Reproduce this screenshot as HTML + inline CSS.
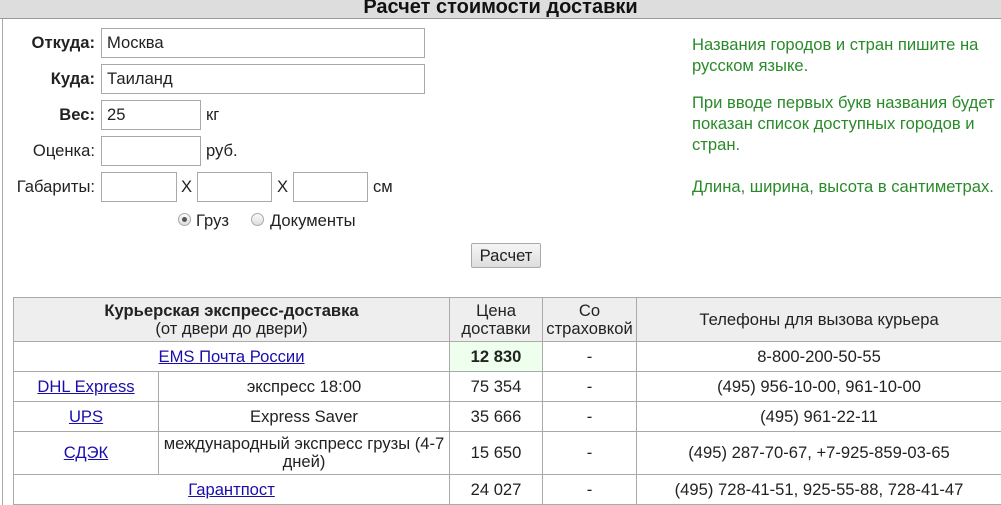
<!DOCTYPE html>
<html><head><meta charset="utf-8"><style>
body{margin:0;width:1001px;height:505px;overflow:hidden;background:#fff;font-family:"Liberation Sans",Arial,sans-serif;font-size:16.6px;color:#222;position:relative}
.hdr{position:absolute;left:0;top:0;width:1001px;height:18px;background:#ddd;border-bottom:1px solid #999;text-align:center;font-weight:bold;font-size:20px;line-height:14px;color:#111;overflow:hidden}
.lb{position:absolute;text-align:right;width:95px;left:0;line-height:30px}
.in{position:absolute;border:1px solid #aaa;box-sizing:border-box;padding-left:5px;line-height:28px;background:#fff}
.t{position:absolute;line-height:30px}
.g{position:absolute;left:692px;color:#2a8a2a;line-height:21px;width:312px}
.rad{position:absolute;width:13px;height:13px;border-radius:50%;border:1px solid #aaa;background:linear-gradient(#fafafa,#ddd);box-sizing:border-box}
.btn{position:absolute;left:471px;top:243px;width:70px;height:25px;border:1px solid #aaa;box-sizing:border-box;background:linear-gradient(#f6f6f6,#ddd);text-align:center;line-height:23px;border-radius:2px}
table{position:absolute;left:13px;top:297px;border-collapse:collapse;width:988px;table-layout:fixed}
td,th{border:1px solid #aaa;text-align:center;padding:0 2px;font-weight:normal;line-height:18px}
th{background:#eee;height:43px}
a{color:#1a0dab;text-decoration:underline}
.vl{position:absolute;left:2px;top:19px;width:1px;height:486px;background:#aaa}
</style></head><body>
<div class="hdr">Расчет стоимости доставки</div>
<div class="vl"></div>
<div class="lb" style="top:28px;font-weight:bold">Откуда:</div>
<div class="in" style="left:101px;top:28px;width:324px;height:30px">Москва</div>
<div class="lb" style="top:64px;font-weight:bold">Куда:</div>
<div class="in" style="left:101px;top:64px;width:324px;height:30px">Таиланд</div>
<div class="lb" style="top:100px;font-weight:bold">Вес:</div>
<div class="in" style="left:101px;top:100px;width:100px;height:30px">25</div>
<div class="t" style="left:206px;top:100px">кг</div>
<div class="lb" style="top:136px">Оценка:</div>
<div class="in" style="left:101px;top:136px;width:100px;height:30px"></div>
<div class="t" style="left:206px;top:136px">руб.</div>
<div class="lb" style="top:172px">Габариты:</div>
<div class="in" style="left:101px;top:172px;width:76px;height:30px"></div>
<div class="t" style="left:181px;top:172px">X</div>
<div class="in" style="left:197px;top:172px;width:75px;height:30px"></div>
<div class="t" style="left:277px;top:172px">X</div>
<div class="in" style="left:293px;top:172px;width:75px;height:30px"></div>
<div class="t" style="left:373px;top:172px">см</div>
<div class="rad" style="left:178px;top:213px"><div style="width:5px;height:5px;border-radius:50%;background:#555;margin:3px"></div></div>
<div class="t" style="left:196px;top:206px">Груз</div>
<div class="rad" style="left:251px;top:213px"></div>
<div class="t" style="left:270px;top:206px">Документы</div>
<div class="btn">Расчет</div>
<div class="g" style="top:34px">Названия городов и стран пишите на русском языке.</div>
<div class="g" style="top:92px">При вводе первых букв названия будет показан список доступных городов и стран.</div>
<div class="g" style="top:176px">Длина, ширина, высота в сантиметрах.</div>
<table>
<colgroup><col style="width:145px"><col style="width:291px"><col style="width:93px"><col style="width:94px"><col style="width:365px"></colgroup>
<tr><th colspan="2"><b>Курьерская экспресс-доставка</b><br>(от двери до двери)</th><th>Цена<br>доставки</th><th style="padding:0">Со<br>страховкой</th><th>Телефоны для вызова курьера</th></tr>
<tr style="height:30px"><td colspan="2"><a>EMS Почта России</a></td><td style="background:#efe;font-weight:bold">12 830</td><td>-</td><td>8-800-200-50-55</td></tr>
<tr style="height:30px"><td><a>DHL Express</a></td><td>экспресс 18:00</td><td>75 354</td><td>-</td><td>(495) 956-10-00, 961-10-00</td></tr>
<tr style="height:30px"><td><a>UPS</a></td><td>Express Saver</td><td>35 666</td><td>-</td><td>(495) 961-22-11</td></tr>
<tr style="height:43px"><td><a>СДЭК</a></td><td>международный экспресс грузы (4-7 дней)</td><td>15 650</td><td>-</td><td>(495) 287-70-67, +7-925-859-03-65</td></tr>
<tr style="height:30px"><td colspan="2"><a>Гарантпост</a></td><td>24 027</td><td>-</td><td>(495) 728-41-51, 925-55-88, 728-41-47</td></tr>
</table>
</body></html>
